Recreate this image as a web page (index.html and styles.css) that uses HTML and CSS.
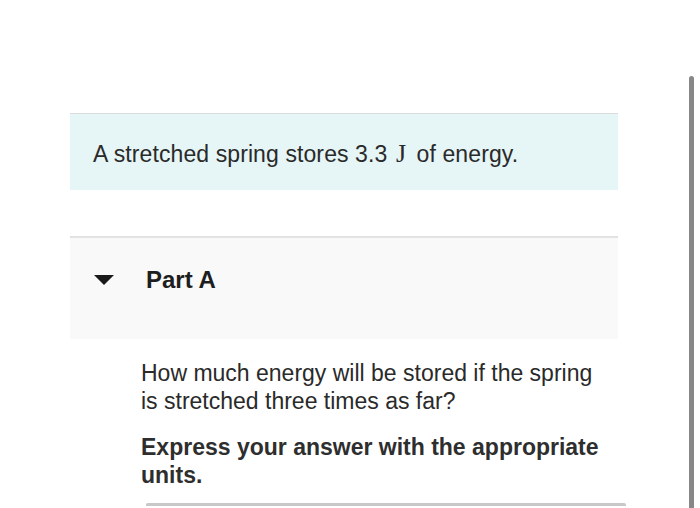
FILE: index.html
```html
<!DOCTYPE html>
<html>
<head>
<meta charset="utf-8">
<link rel="stylesheet" href="styles.css">
</head>
<body>
<div class="page">
  <div class="intro">A stretched spring stores 3.3 <span class="math">J</span> of energy.</div>
  <div class="part-head">
    <span class="caret"></span>
    <span class="part-title">Part A</span>
  </div>
  <div class="part-body">
    <p class="question">How much energy will be stored if the spring is stretched three times as far?</p>
    <p class="instr">Express your answer with the appropriate units.</p>
    <div class="answer-edge"></div>
  </div>
</div>
<div class="scrollbar"></div>
</body>
</html>
```
FILE: styles.css
```css
html, body {
  margin: 0;
  padding: 0;
  background: #ffffff;
  overflow: hidden;
}
body {
  width: 700px;
  height: 508px;
  font-family: "Liberation Sans", Arial, sans-serif;
  color: #222;
}
.page {
  padding-top: 113px;
  margin-left: 70px;
  width: 548px;
}
.intro {
  border-top: 1px solid #dcdcdc;
  background: #e6f5f6;
  height: 77px;
  box-sizing: border-box;
  padding: 25px 0 0 23px;
  font-size: 23px;
  line-height: 30px;
  letter-spacing: 0.1px;
  color: #2a2a2a;
}
.math {
  font-family: "Liberation Serif", "Times New Roman", serif;
  font-size: 26px;
  margin: 0 4px 0 2px;
}
.part-head {
  margin-top: 46px;
  border-top: 2px solid #e2e2e2;
  background: #f9f9f9;
  height: 103px;
  box-sizing: border-box;
  display: flex;
  align-items: center;
  padding: 0 0 17px 24px;
}
.caret {
  width: 0;
  height: 0;
  border-left: 10px solid transparent;
  border-right: 10px solid transparent;
  border-top: 10px solid #1a1a1a;
  margin-right: 32px;
}
.part-title {
  font-weight: bold;
  font-size: 24px;
  color: #1e1e1e;
}
.part-body {
  padding-left: 71px;
  padding-top: 20px;
}
.question {
  margin: 0;
  font-size: 23px;
  line-height: 28px;
  color: #2a2a2a;
  width: 462px;
}
.instr {
  margin: 18px 0 0 0;
  font-size: 23px;
  line-height: 28px;
  font-weight: bold;
  color: #2e2e2e;
  width: 475px;
}
.answer-edge {
  margin: 14px 0 0 5px;
  width: 480px;
  height: 3px;
  background: #c8c8c8;
  border-radius: 2px 2px 0 0;
}
.scrollbar {
  position: absolute;
  left: 689px;
  top: 76px;
  width: 5px;
  height: 432px;
  background: #888888;
  border-radius: 3px 3px 0 0;
}
```
